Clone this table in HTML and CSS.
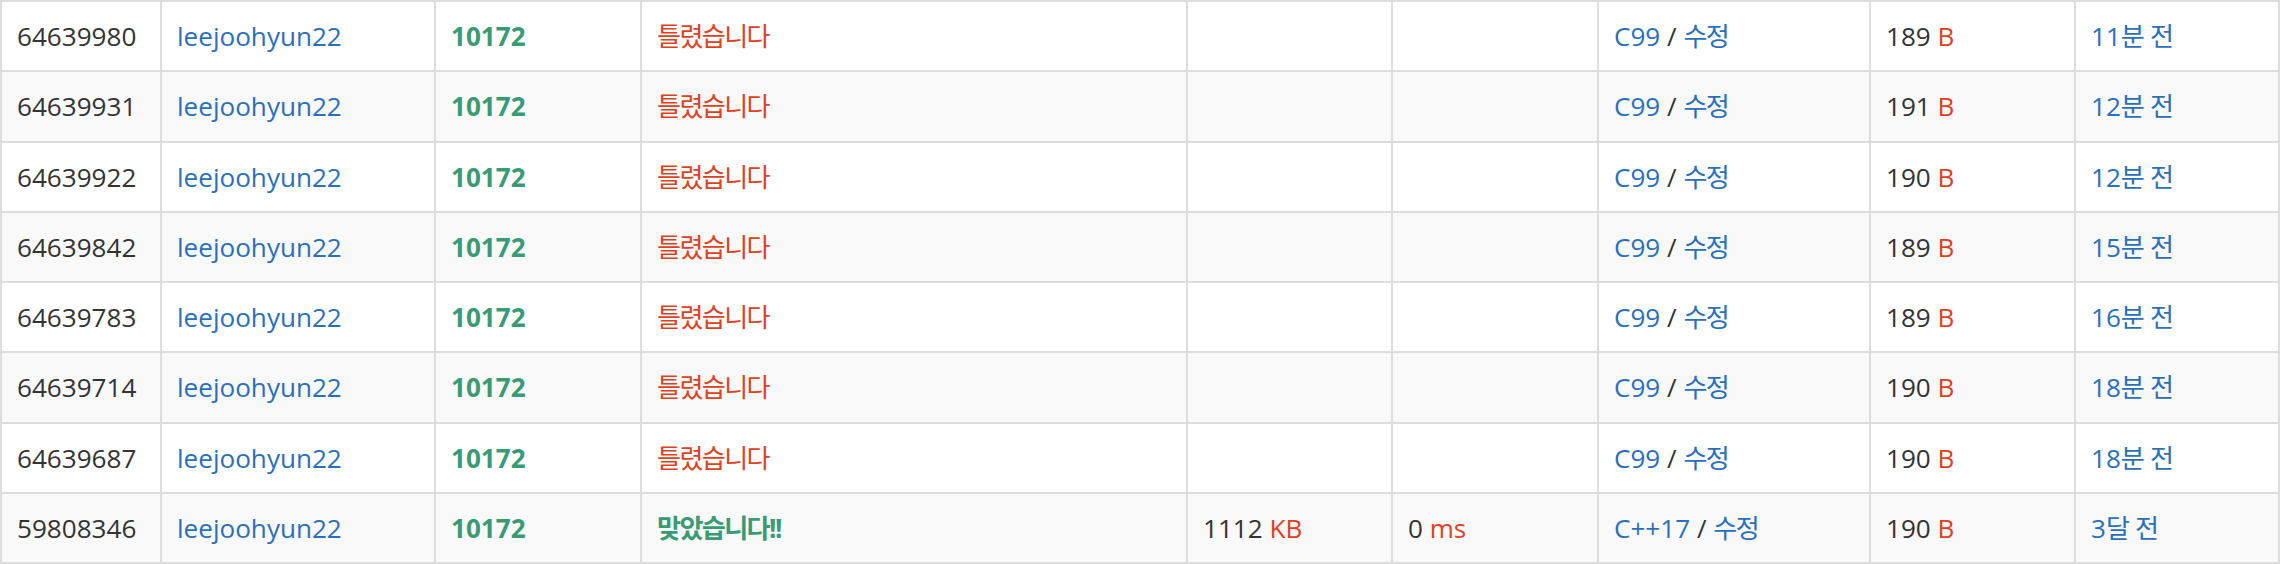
FILE: index.html
```html
<!DOCTYPE html>
<html lang="ko">
<head>
<meta charset="utf-8">
<title>채점 현황</title>
<link rel="stylesheet" href="styles.css">
</head>
<body>
<table class="status">
  <colgroup>
    <col class="c-id"><col class="c-user"><col class="c-prob"><col class="c-res"><col class="c-mem"><col class="c-time"><col class="c-lang"><col class="c-len"><col class="c-date">
  </colgroup>
  <tbody>
    <tr><td>64639980</td><td><a class="link">leejoohyun22</a></td><td><a class="prob">10172</a></td><td><span class="wa ko">틀렸습니다</span></td><td></td><td></td><td><a class="link">C99</a> / <a class="link ko">수정</a></td><td>189 <span class="unit">B</span></td><td><a class="link">11<span class="ko">분</span> <span class="ko">전</span></a></td></tr>
    <tr><td>64639931</td><td><a class="link">leejoohyun22</a></td><td><a class="prob">10172</a></td><td><span class="wa ko">틀렸습니다</span></td><td></td><td></td><td><a class="link">C99</a> / <a class="link ko">수정</a></td><td>191 <span class="unit">B</span></td><td><a class="link">12<span class="ko">분</span> <span class="ko">전</span></a></td></tr>
    <tr><td>64639922</td><td><a class="link">leejoohyun22</a></td><td><a class="prob">10172</a></td><td><span class="wa ko">틀렸습니다</span></td><td></td><td></td><td><a class="link">C99</a> / <a class="link ko">수정</a></td><td>190 <span class="unit">B</span></td><td><a class="link">12<span class="ko">분</span> <span class="ko">전</span></a></td></tr>
    <tr><td>64639842</td><td><a class="link">leejoohyun22</a></td><td><a class="prob">10172</a></td><td><span class="wa ko">틀렸습니다</span></td><td></td><td></td><td><a class="link">C99</a> / <a class="link ko">수정</a></td><td>189 <span class="unit">B</span></td><td><a class="link">15<span class="ko">분</span> <span class="ko">전</span></a></td></tr>
    <tr><td>64639783</td><td><a class="link">leejoohyun22</a></td><td><a class="prob">10172</a></td><td><span class="wa ko">틀렸습니다</span></td><td></td><td></td><td><a class="link">C99</a> / <a class="link ko">수정</a></td><td>189 <span class="unit">B</span></td><td><a class="link">16<span class="ko">분</span> <span class="ko">전</span></a></td></tr>
    <tr><td>64639714</td><td><a class="link">leejoohyun22</a></td><td><a class="prob">10172</a></td><td><span class="wa ko">틀렸습니다</span></td><td></td><td></td><td><a class="link">C99</a> / <a class="link ko">수정</a></td><td>190 <span class="unit">B</span></td><td><a class="link">18<span class="ko">분</span> <span class="ko">전</span></a></td></tr>
    <tr><td>64639687</td><td><a class="link">leejoohyun22</a></td><td><a class="prob">10172</a></td><td><span class="wa ko">틀렸습니다</span></td><td></td><td></td><td><a class="link">C99</a> / <a class="link ko">수정</a></td><td>190 <span class="unit">B</span></td><td><a class="link">18<span class="ko">분</span> <span class="ko">전</span></a></td></tr>
    <tr><td>59808346</td><td><a class="link">leejoohyun22</a></td><td><a class="prob">10172</a></td><td><span class="ac ko">맞았습니다!!</span></td><td>1112 <span class="unit">KB</span></td><td>0 <span class="unit">ms</span></td><td><a class="link">C++17</a> / <a class="link ko">수정</a></td><td>190 <span class="unit">B</span></td><td><a class="link">3<span class="ko">달</span> <span class="ko">전</span></a></td></tr>
  </tbody>
</table>
</body>
</html>
```

FILE: styles.css
```css
html, body {
  margin: 0;
  padding: 0;
  background: #ffffff;
}

.status {
  table-layout: fixed;
  width: 2280px;
  border-collapse: separate;
  border-spacing: 0;
  font-family: "Open Sans", "Noto Sans CJK KR", sans-serif;
  font-size: 26.1px;
  color: #333333;
}

.c-id { width: 160px; }
.c-user { width: 274px; }
.c-prob { width: 206px; }
.c-res { width: 546px; }
.c-mem { width: 205px; }
.c-time { width: 206px; }
.c-lang { width: 272px; }
.c-len { width: 205px; }
.c-date { width: 206px; }

.status td {
  box-sizing: border-box;
  padding: 15px 15px;
  line-height: 38.25px;
  height: 70.25px;
  border-left: 2px solid #dddddd;
  border-top: 2px solid #dddddd;
  white-space: nowrap;
  overflow: hidden;
  vertical-align: top;
}

.status td:last-child {
  border-right: 2px solid #dddddd;
}

.status tr:last-child td {
  border-bottom: 2px solid #dddddd;
  height: 72.25px;
}

.status tr:nth-child(even) td {
  background: #f9f9f9;
}

.ko {
  letter-spacing: -1.6px;
}

.link {
  color: #2b6fb9;
  text-decoration: none;
}

.prob {
  color: #3b9a76;
  font-weight: 700;
  text-decoration: none;
}

.wa {
  color: #dd4124;
}

.ac {
  color: #3b9a76;
  font-weight: 700;
}

.unit {
  color: #dd4124;
}
```
